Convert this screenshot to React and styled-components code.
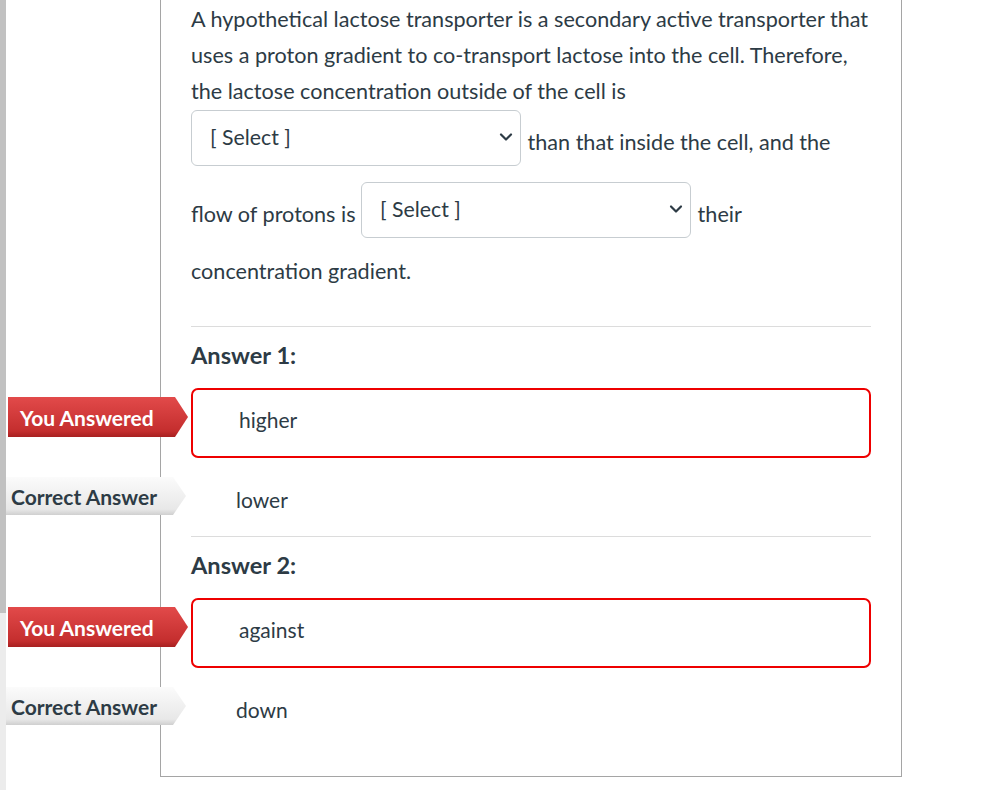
import React from 'react'
import styled, { createGlobalStyle } from 'styled-components'

const GlobalStyle = createGlobalStyle`
  html, body {
    margin: 0;
    padding: 0;
    background: #fff;
  }
  body {
    font-family: Lato, "Open Sans", "Liberation Sans", sans-serif;
    color: #2d3b45;
    -webkit-font-smoothing: antialiased;
  }
`

const Page = styled.div`
  display: flex;
  width: 989px;
  height: 790px;
  overflow: hidden;
`

const Scrollbar = styled.div`
  flex: 0 0 6px;
  background: linear-gradient(#c1c1c1 0 613px, #ececec 613px);
`

const Panel = styled.div`
  margin-left: 154px;
  width: 680px;
  align-self: flex-start;
  padding: 1px 30px 36px 30px;
  border: 1px solid #a5a5a5;
  border-top: none;
`

const Question = styled.div`
  font-size: 21.6px;
  line-height: 36px;
  white-space: nowrap;
`

const SelectWrap = styled.span`
  position: relative;
  display: inline-block;
  box-sizing: border-box;
  width: 330px;
  height: 56px;
  margin: 1px 1px 15px 0;
  vertical-align: middle;
  border: 1px solid #c7cdd1;
  border-radius: 6px;
  background: #fff;
  padding-left: 18px;
  line-height: 52px;
  font-size: 21.3px;
  color: #2d3b45;
`

const Chevron = styled.svg`
  position: absolute;
  right: 7px;
  top: 21px;
  width: 14px;
  height: 10px;
`

const Divider = styled.div`
  border-top: 1px solid #dcdcdc;
  margin-top: ${p => p.$top}px;
`

const Heading = styled.div`
  font-size: 23.6px;
  font-weight: 700;
  line-height: 32px;
  padding-top: 12px;
`

const AnswerRow = styled.div`
  position: relative;
  display: flex;
  align-items: center;
  box-sizing: border-box;
  font-size: 21px;
  ${p => p.$wrong
    ? `
    height: 70px;
    margin-top: 17px;
    padding: 0 0 7px 46px;
    border: 2px solid #ee0000;
    border-radius: 7px;
  `
    : `
    height: 60px;
    margin-top: 12px;
    padding: 0 0 2px 45px;
  `}
`

const Label = styled.div`
  position: absolute;
  left: -185px;
  top: ${p => (p.$wrong ? 'calc(50% - 6px)' : 'calc(50% - 4px)')};
  transform: translateY(-50%);
  box-sizing: border-box;
  height: ${p => (p.$wrong ? 40 : 38)}px;
  width: 180px;
  display: flex;
  align-items: center;
  font-size: 21px;
  font-weight: 700;
  white-space: nowrap;
  clip-path: polygon(0 0, 167px 0, 180px 50%, 167px 100%, 0 100%);
  ${p => p.$wrong
    ? `
    padding-left: 12px;
    color: #fff;
    background: linear-gradient(#e24a4a, #c42e2e 85%, #a82020);
  `
    : `
    padding-left: 5px;
    color: #2d3b45;
    background: linear-gradient(#fbfbfb, #e8e8e8 85%, #cfcfcf);
  `}
`

const Select = () => (
  <SelectWrap>
    [ Select ]
    <Chevron viewBox='0 0 14 10'>
      <path d='M2 2.5 L7 7.5 L12 2.5' fill='none' stroke='#2d3b45' strokeWidth='2.2' strokeLinecap='round' strokeLinejoin='round' />
    </Chevron>
  </SelectWrap>
)

const Answer = ({ number, answered, correct, top }) => (
  <>
    <Divider $top={top} />
    <Heading>Answer {number}:</Heading>
    <AnswerRow $wrong>
      <Label $wrong>You Answered</Label>
      {answered}
    </AnswerRow>
    <AnswerRow>
      <Label>Correct Answer</Label>
      {correct}
    </AnswerRow>
  </>
)

const App = () =>
  <Page>
    <GlobalStyle />
    <Scrollbar />
    <Panel>
      <Question>
        A hypothetical lactose transporter is a secondary active transporter that<br />
        uses a proton gradient to co-transport lactose into the cell. Therefore,<br />
        the lactose concentration outside of the cell is<br />
        <Select /> than that inside the cell, and the<br />
        flow of protons is <Select /> their<br />
        concentration gradient.
      </Question>
      <Answer number={1} answered='higher' correct='lower' top={37} />
      <Answer number={2} answered='against' correct='down' top={6} />
    </Panel>
  </Page>

export default App
